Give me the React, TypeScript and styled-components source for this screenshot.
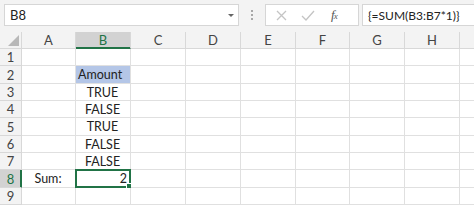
import React from "react";
import styled, { createGlobalStyle } from "styled-components";

const Global = createGlobalStyle`
  html, body { margin: 0; padding: 0; background: #ffffff; overflow: hidden; }
  body { font-family: Lato, "Open Sans", sans-serif; }
`;

const Page = styled.div`
  width: 474px;
  height: 205px;
  display: flex;
  flex-direction: column;
  background: #ffffff;
  overflow: hidden;
`;

const FormulaBar = styled.div`
  height: 33px;
  box-sizing: border-box;
  background: #f3f3f3;
  display: flex;
  align-items: flex-start;
  padding: 4px 0 0 4px;
`;

const NameBox = styled.div`
  width: 235px;
  height: 22px;
  box-sizing: border-box;
  background: #fff;
  border: 1px solid #d6d6d6;
  display: flex;
  align-items: center;
  justify-content: space-between;
  padding: 0 4px 0 5px;
  font-size: 13px;
  color: #222;
`;

const Caret = styled.span`
  width: 0;
  height: 0;
  border-left: 3px solid transparent;
  border-right: 3px solid transparent;
  border-top: 3px solid #666;
`;

const Grip = styled.div`
  width: 26px;
  height: 22px;
  display: flex;
  flex-direction: column;
  align-items: center;
  justify-content: center;
  gap: 2px;
`;

const Dot = styled.span`
  width: 2px;
  height: 2px;
  background: #a8a8a8;
`;

const Buttons = styled.div`
  width: 94px;
  height: 22px;
  box-sizing: border-box;
  background: #fff;
  border: 1px solid #d6d6d6;
  display: flex;
  align-items: center;
  padding-left: 10px;
  gap: 14px;
`;

const Fx = styled.span`
  font-family: "Liberation Serif", serif;
  font-style: italic;
  font-size: 13px;
  color: #555;
  margin-left: 2px;
  letter-spacing: -1px;
`;

const Sub = styled.span`
  font-size: 9px;
`;

const Formula = styled.div`
  flex: 1;
  height: 22px;
  box-sizing: border-box;
  margin-left: 3px;
  background: #fff;
  border: 1px solid #d6d6d6;
  border-right: none;
  display: flex;
  align-items: center;
  padding-left: 5px;
  font-size: 12px;
  color: #222;
`;

const Grid = styled.div`
  display: grid;
  grid-template-columns: 22px 54px 55px 55px 55px 55px 54px 55px 55px 20px;
  grid-template-rows: 17px 17px 18px 17px 17px 18px 17px 17px 18px 17px;
`;

const Head = styled.div<{ $sel?: boolean; $row?: boolean }>`
  box-sizing: border-box;
  background: ${(p) => (p.$sel ? "#d2d2d2" : "#f3f3f3")};
  color: ${(p) => (p.$sel ? "#217346" : "#444")};
  font-size: 13px;
  display: flex;
  align-items: center;
  justify-content: center;
  border-right: 1px solid ${(p) => (p.$row && p.$sel ? "#217346" : "#d8d8d8")};
  border-bottom: 1px solid ${(p) => (!p.$row && p.$sel ? "#217346" : "#d8d8d8")};
  ${(p) => (!p.$row && p.$sel ? "box-shadow: inset 0 -1px 0 #217346;" : "")}
  ${(p) => (p.$row && p.$sel ? "box-shadow: inset -1px 0 0 #217346;" : "")}
`;

const Corner = styled.div`
  box-sizing: border-box;
  background: #f3f3f3;
  border-right: 1px solid #d8d8d8;
  border-bottom: 1px solid #d8d8d8;
  position: relative;
  &::after {
    content: "";
    position: absolute;
    right: 2px;
    bottom: 2px;
    width: 0;
    height: 0;
    border-left: 11px solid transparent;
    border-bottom: 11px solid #b8b8b8;
  }
`;

const Cell = styled.div<{ $align?: "left" | "center" | "right"; $fill?: string; $active?: boolean }>`
  box-sizing: border-box;
  position: relative;
  background: ${(p) => p.$fill || "#fff"};
  border-right: 1px solid #e0e0e0;
  border-bottom: 1px solid #e0e0e0;
  font-size: 12.5px;
  color: #222;
  display: flex;
  align-items: center;
  justify-content: ${(p) =>
    p.$align === "center" ? "center" : p.$align === "right" ? "flex-end" : "flex-start"};
  padding: 0 3px 0 2px;
  white-space: nowrap;
  ${(p) =>
    p.$active
      ? `
    &::before {
      content: "";
      position: absolute;
      left: -1px; top: -1px; right: -1px; bottom: -1px;
      border: 2px solid #217346;
      pointer-events: none;
    }
    &::after {
      content: "";
      position: absolute;
      right: -3px; bottom: -3px;
      width: 5px; height: 5px;
      background: #217346;
      border: 1px solid #fff;
    }
  `
      : ""}
`;

const cols = ["A", "B", "C", "D", "E", "F", "G", "H", ""];

type CellData = { text?: string; align?: "left" | "center" | "right"; fill?: string; active?: boolean };

const data: Record<string, CellData> = {
  B2: { text: "Amount", align: "left", fill: "#b4c6e7" },
  B3: { text: "TRUE", align: "center" },
  B4: { text: "FALSE", align: "center" },
  B5: { text: "TRUE", align: "center" },
  B6: { text: "FALSE", align: "center" },
  B7: { text: "FALSE", align: "center" },
  A8: { text: "Sum:", align: "center" },
  B8: { text: "2", align: "right", active: true },
};

export default function App() {
  const rows = [1, 2, 3, 4, 5, 6, 7, 8, 9];
  return (
    <Page>
      <Global />
      <FormulaBar>
        <NameBox>
          <span>B8</span>
          <Caret />
        </NameBox>
        <Grip>
          <Dot />
          <Dot />
          <Dot />
        </Grip>
        <Buttons>
          <svg width="11" height="11" viewBox="0 0 11 11">
            <path d="M1 1 L10 10 M10 1 L1 10" stroke="#c4c4c4" strokeWidth="1.3" fill="none" />
          </svg>
          <svg width="14" height="11" viewBox="0 0 14 11">
            <path d="M1 6 L5 10 L13 1" stroke="#c4c4c4" strokeWidth="1.3" fill="none" />
          </svg>
          <Fx>
            f<Sub>x</Sub>
          </Fx>
        </Buttons>
        <Formula>{"{=SUM(B3:B7*1)}"}</Formula>
      </FormulaBar>
      <Grid>
        <Corner />
        {cols.map((c, i) => (
          <Head key={i} $sel={c === "B"}>
            {c}
          </Head>
        ))}
        {rows.map((r) => (
          <React.Fragment key={r}>
            <Head $row $sel={r === 8}>
              {r}
            </Head>
            {cols.map((c, i) => {
              const d = data[`${c}${r}`] || {};
              return (
                <Cell key={i} $align={d.align} $fill={d.fill} $active={d.active}>
                  {d.text}
                </Cell>
              );
            })}
          </React.Fragment>
        ))}
      </Grid>
    </Page>
  );
}
